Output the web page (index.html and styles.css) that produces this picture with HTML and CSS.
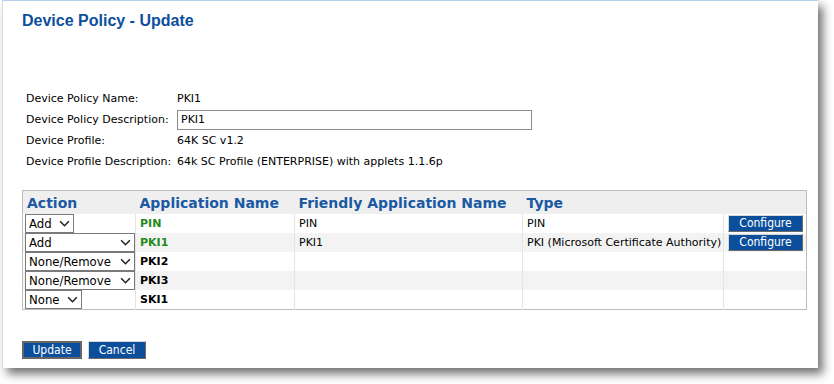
FILE: index.html
```html
<!DOCTYPE html>
<html lang="en">
<head>
    <meta charset="UTF-8">
    <title>Device Policy - Update</title>
    <link rel="stylesheet" href="styles.css">
</head>
<body>
    <div class="window">
        <h1 class="page-title">Device Policy - Update</h1>

        <div class="details">
            <div class="label">Device Policy Name:</div>
            <div class="value">PKI1</div>
            <div class="label">Device Policy Description:</div>
            <div class="value"><input type="text" class="desc-input" value="PKI1"></div>
            <div class="label">Device Profile:</div>
            <div class="value">64K SC v1.2</div>
            <div class="label">Device Profile Description:</div>
            <div class="value">64k SC Profile (ENTERPRISE) with applets 1.1.6p</div>
        </div>

        <table class="apps">
            <colgroup>
                <col class="c-action">
                <col class="c-app">
                <col class="c-friendly">
                <col class="c-type">
                <col class="c-conf">
            </colgroup>
            <thead>
                <tr>
                    <th>Action</th>
                    <th>Application Name</th>
                    <th>Friendly Application Name</th>
                    <th>Type</th>
                    <th></th>
                </tr>
            </thead>
            <tbody>
                <tr>
                    <td class="act"><span class="sel w-small"><select><option>Add</option></select><svg viewBox="0 0 12 8"><path d="M1 1.5 L6 6.5 L11 1.5" /></svg></span></td>
                    <td class="app added">PIN</td>
                    <td>PIN</td>
                    <td>PIN</td>
                    <td class="conf"><button class="btn">Configure</button></td>
                </tr>
                <tr>
                    <td class="act"><span class="sel w-full"><select><option>Add</option></select><svg viewBox="0 0 12 8"><path d="M1 1.5 L6 6.5 L11 1.5" /></svg></span></td>
                    <td class="app added">PKI1</td>
                    <td>PKI1</td>
                    <td>PKI (Microsoft Certificate Authority)</td>
                    <td class="conf"><button class="btn">Configure</button></td>
                </tr>
                <tr>
                    <td class="act"><span class="sel w-full"><select><option>None/Remove</option></select><svg viewBox="0 0 12 8"><path d="M1 1.5 L6 6.5 L11 1.5" /></svg></span></td>
                    <td class="app">PKI2</td>
                    <td></td>
                    <td></td>
                    <td></td>
                </tr>
                <tr>
                    <td class="act"><span class="sel w-full"><select><option>None/Remove</option></select><svg viewBox="0 0 12 8"><path d="M1 1.5 L6 6.5 L11 1.5" /></svg></span></td>
                    <td class="app">PKI3</td>
                    <td></td>
                    <td></td>
                    <td></td>
                </tr>
                <tr>
                    <td class="act"><span class="sel w-none"><select><option>None</option></select><svg viewBox="0 0 12 8"><path d="M1 1.5 L6 6.5 L11 1.5" /></svg></span></td>
                    <td class="app">SKI1</td>
                    <td></td>
                    <td></td>
                    <td></td>
                </tr>
            </tbody>
        </table>

        <div class="actions">
            <button class="btn btn-default">Update</button>
            <button class="btn">Cancel</button>
        </div>
    </div>
</body>
</html>
```

FILE: styles.css
```css
body { margin: 0; padding-bottom: 16px; background: #fff; font-family: "DejaVu Sans", Verdana, sans-serif; font-size: 11px; color: #000; }

.window {
    box-sizing: border-box;
    width: 816px;
    height: 368px;
    margin-left: 2px;
    padding: 0 0 0 19px;
    background: #fff;
    border-left: 1px solid #dcdcdc;
    border-top: 1px solid #b4d0ec;
    box-shadow: 5px 6px 9px rgba(0, 0, 0, 0.55);
}

.page-title {
    margin: 0;
    padding-top: 10px;
    height: 20px;
    font-family: "Liberation Sans", Arial, sans-serif;
    font-size: 16px;
    font-weight: bold;
    color: #0d4f9b;
    line-height: 20px;
}

/* policy info */
.details {
    display: grid;
    grid-template-columns: 151px 360px;
    grid-auto-rows: 21px;
    align-items: center;
    margin: 57px 0 0 4px;
}
.desc-input {
    box-sizing: border-box;
    width: 355px;
    height: 20px;
    margin: 0;
    padding: 0 3px;
    border: 1px solid #8c8c8c;
    font: inherit;
    color: #000;
}

/* applications table */
.apps {
    margin-top: 18px;
    border-collapse: collapse;
    table-layout: fixed;
    width: 784px;
    border: 1px solid #bdbdbd;
}
.c-action { width: 113px; }
.c-app { width: 159px; }
.c-friendly { width: 228px; }
.c-type { width: 201px; }
.c-conf { width: 83px; }

.apps th {
    height: 23px;
    padding: 0 4px;
    background: #efefef;
    text-align: left;
    font-size: 14px;
    font-weight: bold;
    color: #1b5aa3;
    white-space: nowrap;
}
.apps td {
    height: 19px;
    padding: 0 4px;
    border-left: 1px solid #e4e4e4;
    white-space: nowrap;
    vertical-align: middle;
}
.apps td.act { padding: 0 0 0 2px; border-left: none; }
.apps tbody tr:nth-child(even) td { background: #f3f3f3; }
.apps td.app { font-weight: bold; }
.apps td.added { color: #23891f; }
.apps td.conf { padding: 0 2px 0 4px; }

/* selects */
.sel { position: relative; display: inline-block; vertical-align: middle; }
.sel select {
    appearance: none;
    -webkit-appearance: none;
    box-sizing: border-box;
    height: 19px;
    margin: 0;
    padding: 0 0 0 3px;
    border: 1px solid #7a7a7a;
    border-radius: 0;
    background: #fff;
    font-family: "DejaVu Sans Condensed", "DejaVu Sans", sans-serif;
    font-size: 13px;
    color: #000;
    line-height: 17px;
}
.sel svg {
    position: absolute;
    right: 4px;
    top: 6px;
    width: 11px;
    height: 7px;
    fill: none;
    stroke: #222;
    stroke-width: 1.8;
    pointer-events: none;
}
.w-small select { width: 49px; }
.w-full select { width: 110px; }
.w-none select { width: 57px; }

/* buttons */
.btn {
    box-sizing: border-box;
    height: 17px;
    padding: 0 8px;
    background: #0b4f9c;
    color: #fff;
    font-family: "DejaVu Sans Condensed", "DejaVu Sans", sans-serif;
    font-size: 12px;
    line-height: 13px;
    border: 1px solid;
    border-color: #d8d8d8 #6b6b6b #6b6b6b #d8d8d8;
    border-radius: 0;
    cursor: pointer;
}
.conf .btn { width: 75px; height: 17px; }

.actions { display: flex; gap: 6px; margin-top: 31px; }
.actions .btn { height: 18px; padding: 0; }
.actions .btn:first-child { width: 60px; }
.actions .btn:last-child { width: 58px; }
.btn-default { border: 2px solid #666; }
```
